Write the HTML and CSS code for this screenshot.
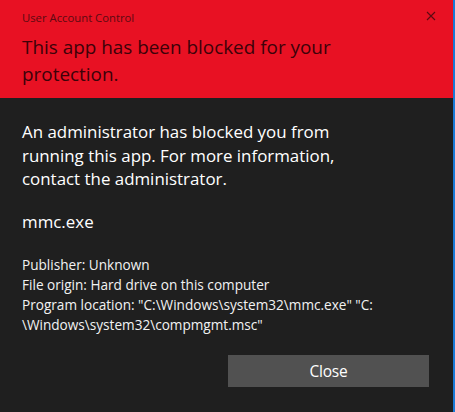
FILE: index.html
```html
<!DOCTYPE html>
<html>
<head>
<meta charset="utf-8">
<link rel="stylesheet" href="styles.css">
</head>
<body>
<div class="dialog">
  <header class="header">
    <div class="titlebar">
      <span class="title">User Account Control</span>
      <svg class="close-x" width="10" height="10" viewBox="0 0 10 10"><path d="M1 1L9 9M9 1L1 9" stroke="#5c0a12" stroke-width="1.1" fill="none"/></svg>
    </div>
    <h1 class="headline">This app has been blocked for your<br>protection.</h1>
  </header>
  <main class="content">
    <p class="message">An administrator has blocked you from<br>running this app. For more information,<br>contact the administrator.</p>
    <p class="app-name">mmc.exe</p>
    <div class="details">
      <div>Publisher: Unknown</div>
      <div>File origin: Hard drive on this computer</div>
      <div>Program location: "C:\Windows\system32\mmc.exe" "C:<br>\Windows\system32\compmgmt.msc"</div>
    </div>
    <div class="actions">
      <button class="btn">Close</button>
    </div>
  </main>
</div>
</body>
</html>
```
FILE: styles.css
```css
html, body {
  margin: 0;
  padding: 0;
  background: #1f1f1f;
}
body {
  font-family: "Open Sans", "Noto Sans", sans-serif;
}
.dialog {
  width: 453px;
  height: 412px;
  border-right: 2px solid #1a7ad6;
  display: flex;
  flex-direction: column;
  background: #1f1f1f;
}
.header {
  background: #e81123;
  height: 98px;
  box-sizing: border-box;
  padding: 8px 0 0 22px;
}
.titlebar {
  display: flex;
  justify-content: space-between;
  align-items: center;
  padding-right: 17px;
  height: 18px;
}
.title {
  font-size: 11.3px;
  color: #5c0a12;
}
.close-x {
  margin-bottom: 2px;
}
.headline {
  margin: 8px 0 0 0;
  font-weight: normal;
  font-size: 18.9px;
  line-height: 27px;
  color: #3d0209;
}
.content {
  flex: 1;
  padding: 22px 0 0 22px;
  color: #ffffff;
}
.message {
  margin: 0;
  font-size: 16.9px;
  line-height: 23.5px;
}
.app-name {
  margin: 19.5px 0 0 0;
  font-size: 16.9px;
  line-height: 23px;
}
.details {
  margin-top: 21.5px;
  font-size: 13.6px;
  line-height: 20px;
  color: #f2f2f2;
}
.actions {
  display: flex;
  justify-content: flex-end;
  padding-right: 24px;
  margin-top: 20.5px;
}
.btn {
  width: 201px;
  height: 32px;
  border: none;
  background: #515151;
  color: #ffffff;
  font-family: inherit;
  font-size: 15.5px;
  letter-spacing: -0.2px;
  padding: 0;
}
```
